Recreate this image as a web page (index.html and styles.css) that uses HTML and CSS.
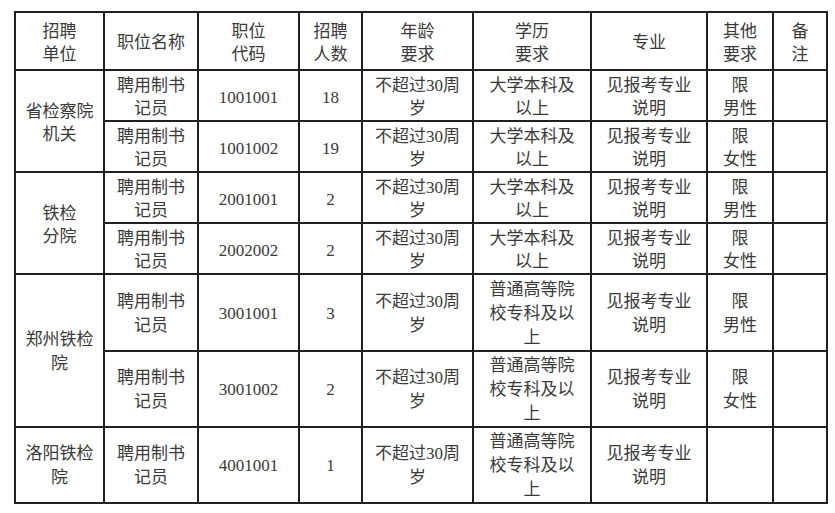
FILE: index.html
```html
<!DOCTYPE html>
<html lang="zh-CN">
<head>
<meta charset="utf-8">
<title>招聘职位表</title>
<link rel="stylesheet" href="styles.css">
</head>
<body>
<div class="page">
<table class="jobs">
<colgroup>
<col class="c1"><col class="c2"><col class="c3"><col class="c4"><col class="c5"><col class="c6"><col class="c7"><col class="c8"><col class="c9">
</colgroup>
<thead>
<tr class="head">
<th>招聘<br>单位</th><th>职位名称</th><th>职位<br>代码</th><th>招聘<br>人数</th><th>年龄<br>要求</th><th>学历<br>要求</th><th>专业</th><th>其他<br>要求</th><th>备<br>注</th>
</tr>
</thead>
<tbody>
<tr class="short">
<td rowspan="2">省检察院<br>机关</td><td>聘用制书<br>记员</td><td>1001001</td><td>18</td><td>不超过30周<br>岁</td><td>大学本科及<br>以上</td><td>见报考专业<br>说明</td><td>限<br>男性</td><td></td>
</tr>
<tr class="short">
<td>聘用制书<br>记员</td><td>1001002</td><td>19</td><td>不超过30周<br>岁</td><td>大学本科及<br>以上</td><td>见报考专业<br>说明</td><td>限<br>女性</td><td></td>
</tr>
<tr class="short">
<td rowspan="2">铁检<br>分院</td><td>聘用制书<br>记员</td><td>2001001</td><td>2</td><td>不超过30周<br>岁</td><td>大学本科及<br>以上</td><td>见报考专业<br>说明</td><td>限<br>男性</td><td></td>
</tr>
<tr class="short">
<td>聘用制书<br>记员</td><td>2002002</td><td>2</td><td>不超过30周<br>岁</td><td>大学本科及<br>以上</td><td>见报考专业<br>说明</td><td>限<br>女性</td><td></td>
</tr>
<tr class="tall first">
<td rowspan="2">郑州铁检<br>院</td><td>聘用制书<br>记员</td><td>3001001</td><td>3</td><td>不超过30周<br>岁</td><td>普通高等院<br>校专科及以<br>上</td><td>见报考专业<br>说明</td><td>限<br>男性</td><td></td>
</tr>
<tr class="tall">
<td>聘用制书<br>记员</td><td>3001002</td><td>2</td><td>不超过30周<br>岁</td><td>普通高等院<br>校专科及以<br>上</td><td>见报考专业<br>说明</td><td>限<br>女性</td><td></td>
</tr>
<tr class="tall">
<td>洛阳铁检<br>院</td><td>聘用制书<br>记员</td><td>4001001</td><td>1</td><td>不超过30周<br>岁</td><td>普通高等院<br>校专科及以<br>上</td><td>见报考专业<br>说明</td><td></td><td></td>
</tr>
</tbody>
</table>
</div>
</body>
</html>
```
FILE: styles.css
```css
html, body {
  margin: 0;
  padding: 0;
  background: #ffffff;
}
.page {
  padding: 11px 0 0 14px;
}
.jobs {
  border-collapse: collapse;
  table-layout: fixed;
  width: 812px;
  font-family: "Liberation Serif", "Noto Sans CJK SC", serif;
  font-size: 17px;
  line-height: 23px;
  color: #3a3a3a;
}
.c1 { width: 89px; }
.c2 { width: 94px; }
.c3 { width: 101px; }
.c4 { width: 63px; }
.c5 { width: 111px; }
.c6 { width: 118px; }
.c7 { width: 116px; }
.c8 { width: 66px; }
.c9 { width: 54px; }
.jobs th,
.jobs td {
  border: 2px solid #1f1f1f;
  padding: 3px 2px 0;
  text-align: center;
  vertical-align: middle;
  font-weight: normal;
  white-space: nowrap;
}
.head { height: 58px; }
.short { height: 51px; }
.tall { height: 76px; }
.tall.first { height: 77px; }
.tall td {
  line-height: 24px;
  padding-top: 2px;
}
```
